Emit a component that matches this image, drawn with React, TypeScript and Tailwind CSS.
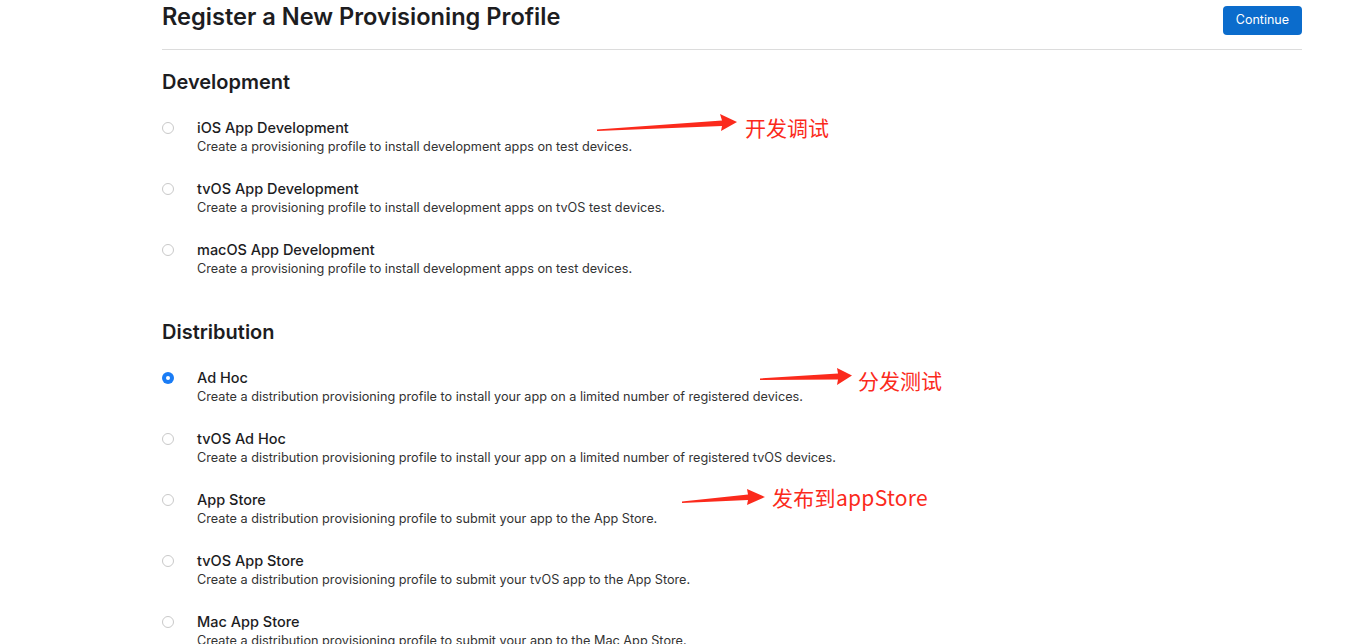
import React, { useState } from "react";

type Option = { id: string; title: string; desc: string };

const development: Option[] = [
  {
    id: "ios-dev",
    title: "iOS App Development",
    desc: "Create a provisioning profile to install development apps on test devices.",
  },
  {
    id: "tvos-dev",
    title: "tvOS App Development",
    desc: "Create a provisioning profile to install development apps on tvOS test devices.",
  },
  {
    id: "macos-dev",
    title: "macOS App Development",
    desc: "Create a provisioning profile to install development apps on test devices.",
  },
];

const distribution: Option[] = [
  {
    id: "adhoc",
    title: "Ad Hoc",
    desc: "Create a distribution provisioning profile to install your app on a limited number of registered devices.",
  },
  {
    id: "tvos-adhoc",
    title: "tvOS Ad Hoc",
    desc: "Create a distribution provisioning profile to install your app on a limited number of registered tvOS devices.",
  },
  {
    id: "appstore",
    title: "App Store",
    desc: "Create a distribution provisioning profile to submit your app to the App Store.",
  },
  {
    id: "tvos-appstore",
    title: "tvOS App Store",
    desc: "Create a distribution provisioning profile to submit your tvOS app to the App Store.",
  },
  {
    id: "mac-appstore",
    title: "Mac App Store",
    desc: "Create a distribution provisioning profile to submit your app to the Mac App Store.",
  },
];

function Radio({ checked }: { checked: boolean }) {
  return checked ? (
    <span className="mt-[4px] flex h-3 w-3 shrink-0 items-center justify-center rounded-full bg-[#1a7cf5]">
      <span className="h-[4px] w-[4px] rounded-full bg-white" />
    </span>
  ) : (
    <span className="mt-[4px] h-3 w-3 shrink-0 rounded-full border border-[#c9c9c9] bg-white" />
  );
}

function Section({
  title,
  options,
  selected,
  onSelect,
}: {
  title: string;
  options: Option[];
  selected: string;
  onSelect: (id: string) => void;
}) {
  return (
    <section>
      <h2 className="text-[20px] font-semibold leading-[28px] text-[#1d1d1f]">{title}</h2>
      <div className="mt-[22px] flex flex-col gap-[23px]">
        {options.map((o) => (
          <label key={o.id} className="flex cursor-pointer items-start gap-[23px]" onClick={() => onSelect(o.id)}>
            <Radio checked={selected === o.id} />
            <div>
              <div className="text-[14.5px] font-medium leading-[20px] text-[#1d1d1f]">{o.title}</div>
              <div className="text-[12.7px] leading-[18px] text-[#333]">{o.desc}</div>
            </div>
          </label>
        ))}
      </div>
    </section>
  );
}

function Arrows() {
  return (
    <svg className="pointer-events-none absolute left-0 top-0" width="1360" height="644">
      <polygon fill="#fb2a1c" points="597,129.5 722,120.5 720,114 737,122 721,131 722,126 597,131" />
      <polygon fill="#fb2a1c" points="760,378.5 838,373.5 837,368 852,375.5 837,385 838,379.5 760,380" />
      <polygon fill="#fb2a1c" points="682,501.5 748,494.5 747,489 765,497 747,505 748,500 682,503" />
    </svg>
  );
}

export default function App() {
  const [selected, setSelected] = useState("adhoc");

  return (
    <div
      className="relative h-[644px] overflow-hidden bg-white"
      style={{ fontFamily: "Inter, 'Noto Sans', sans-serif" }}
    >
      <div className="ml-[162px] w-[1140px]">
        <header className="flex items-start justify-between border-b border-[#dcdcdc] pb-[14px]">
          <h1 className="text-[23.6px] font-semibold leading-[34px] text-[#1d1d1f]">
            Register a New Provisioning Profile
          </h1>
          <button className="mt-[6px] h-[29px] rounded-[4px] bg-[#0b6ccc] px-[13px] text-[12.5px] text-white">
            Continue
          </button>
        </header>

        <div className="mt-[18px]">
          <Section title="Development" options={development} selected={selected} onSelect={setSelected} />
        </div>
        <div className="mt-[40px]">
          <Section title="Distribution" options={distribution} selected={selected} onSelect={setSelected} />
        </div>
      </div>

      <Arrows />
      <div
        className="pointer-events-none absolute left-0 top-0 text-[21px] leading-[28px] text-[#fb2a1c]"
        style={{ fontFamily: "'Noto Sans CJK SC', 'Noto Sans', sans-serif" }}
      >
        <span className="absolute left-[745px] top-[113px] whitespace-nowrap">开发调试</span>
        <span className="absolute left-[858px] top-[366px] whitespace-nowrap">分发测试</span>
        <span className="absolute left-[772px] top-[483px] whitespace-nowrap tracking-[0.3px]">发布到appStore</span>
      </div>
    </div>
  );
}
